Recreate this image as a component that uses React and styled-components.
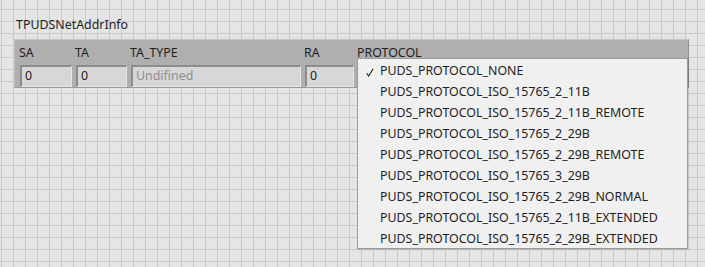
import React from "react";
import styled, { createGlobalStyle } from "styled-components";

const GlobalStyle = createGlobalStyle`
  html, body {
    margin: 0;
    padding: 0;
  }
  body {
    font-family: "Noto Sans", "Liberation Sans", sans-serif;
    background-color: #e5e5e5;
    background-image:
      linear-gradient(to right, #c9c9c9 1px, transparent 1px),
      linear-gradient(to bottom, #c9c9c9 1px, transparent 1px);
    background-size: 12px 12px;
    background-position: 1px 9px;
  }
`;

const Canvas = styled.div`
  position: relative;
  width: 705px;
  height: 267px;
  padding: 16px 0 0 14px;
  box-sizing: border-box;
`;

const ClusterLabel = styled.div`
  font-size: 12.4px;
  line-height: 17px;
  color: #1e1e1e;
  padding-left: 2px;
  height: 23px;
`;

const Panel = styled.div`
  width: 675px;
  height: 49px;
  box-sizing: border-box;
  background: #afafaf;
  border-top: 1px solid #c6c6c6;
  border-left: 1px solid #c2c2c2;
  border-right: 1px solid #8e8e8e;
  border-bottom: 1px solid #9a9a9a;
  padding: 3px 5px 0 5px;
  display: grid;
  grid-template-columns: 52px 51px 170px 49px 1fr;
  grid-template-rows: 20px 22px;
  column-gap: 4px;
  row-gap: 2px;
`;

const ColLabel = styled.div`
  font-size: 12.4px;
  line-height: 20px;
  color: #1e1e1e;
  margin-left: -1px;
`;

const Field = styled.div`
  box-sizing: border-box;
  height: 22px;
  background: #d7d7d7;
  border-top: 2px solid #8c8c8c;
  border-left: 2px solid #8c8c8c;
  border-right: 1px solid #e6e6e6;
  border-bottom: 1px solid #e6e6e6;
  padding-left: 3px;
  font-size: 12.4px;
  line-height: 18px;
  color: ${(p) => (p.$dim ? "#8e8e8e" : "#1e1e1e")};
`;

const Menu = styled.ul`
  position: absolute;
  left: 357px;
  top: 58px;
  width: 331px;
  height: 191px;
  box-sizing: border-box;
  margin: 0;
  padding: 1px 0 0 0;
  list-style: none;
  background: #f0f0f0;
  border: 1px solid #9c9c9c;
  box-shadow: 1px 1px 1px rgba(0, 0, 0, 0.12);
`;

const Item = styled.li`
  position: relative;
  height: 21px;
  line-height: 21px;
  padding-left: 22px;
  font-size: 12.4px;
  color: #1e1e1e;
  white-space: nowrap;
`;

const Check = styled.svg`
  position: absolute;
  left: 8px;
  top: 8px;
`;

const columns = [
  { label: "SA", value: "0" },
  { label: "TA", value: "0" },
  { label: "TA_TYPE", value: "Undifined", dim: true },
  { label: "RA", value: "0" },
  { label: "PROTOCOL", value: "" },
];

const protocols = [
  "PUDS_PROTOCOL_NONE",
  "PUDS_PROTOCOL_ISO_15765_2_11B",
  "PUDS_PROTOCOL_ISO_15765_2_11B_REMOTE",
  "PUDS_PROTOCOL_ISO_15765_2_29B",
  "PUDS_PROTOCOL_ISO_15765_2_29B_REMOTE",
  "PUDS_PROTOCOL_ISO_15765_3_29B",
  "PUDS_PROTOCOL_ISO_15765_2_29B_NORMAL",
  "PUDS_PROTOCOL_ISO_15765_2_11B_EXTENDED",
  "PUDS_PROTOCOL_ISO_15765_2_29B_EXTENDED",
];

const App = () => {
  return (
    <Canvas>
      <GlobalStyle />
      <ClusterLabel>TPUDSNetAddrInfo</ClusterLabel>
      <Panel>
        {columns.map((c) => (
          <ColLabel key={c.label}>{c.label}</ColLabel>
        ))}
        {columns.map((c) => (
          <Field key={c.label} $dim={c.dim}>
            {c.value}
          </Field>
        ))}
      </Panel>
      <Menu>
        {protocols.map((p, i) => (
          <Item key={p}>
            {i === 0 && (
              <Check width="8" height="9" viewBox="0 0 8 9">
                <path d="M0.8 5.2 L2.6 8 L7.2 0.8" fill="none" stroke="#1e1e1e" strokeWidth="1.1" />
              </Check>
            )}
            {p}
          </Item>
        ))}
      </Menu>
    </Canvas>
  );
};

export default App;
